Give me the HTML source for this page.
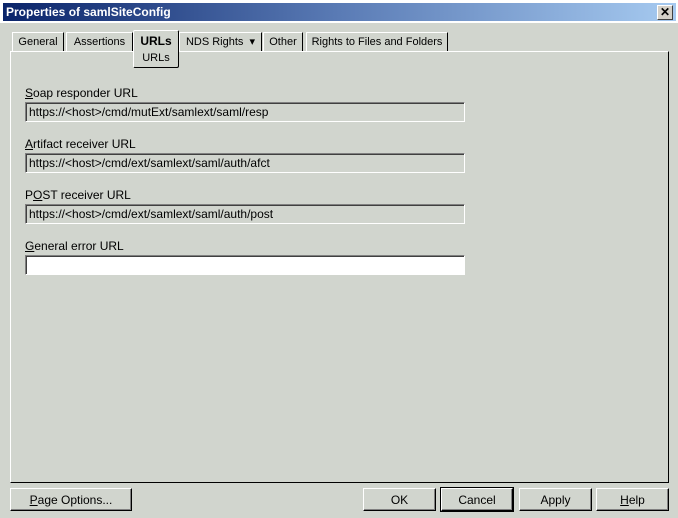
<!DOCTYPE html>
<html><head><style>
body{margin:0;width:678px;height:518px;background:#d1d5ce;font-family:"Liberation Sans",sans-serif;font-size:12px;position:relative;overflow:hidden}
.a{position:absolute;white-space:nowrap}
.title{left:0;top:0;width:678px;height:21px;background:#fff;border-top:2px solid #fff;}
.bar{left:3px;top:3px;width:673px;height:18px;background:linear-gradient(90deg,#0a246a,#5a7bb5 50%,#a6caf0);color:#fff;font-weight:bold;font-size:12px;line-height:18px;padding-left:3px;box-sizing:border-box}
.x{right:5px;top:5px;width:14px;height:13px;background:#d4d0c8;border:1px solid;border-color:#fff #404040 #404040 #fff;color:#000;font-size:12px;line-height:12px;text-align:center;font-weight:bold}
.tab{top:32px;height:19px;border:1px solid;border-color:#fff #000 transparent #fff;border-bottom:none;line-height:18px;text-align:center;box-sizing:border-box;font-size:11px}
.panel{left:10px;top:51px;width:659px;height:432px;border:1px solid;border-color:#fff #000 #000 #fff;box-sizing:border-box}
.lab{left:25px}
.f{left:25px;width:440px;height:20px;border:1px solid;border-color:#808080 #fff #fff #808080;box-shadow:inset 1px 1px 0 #404040;background:#d1d5ce;line-height:19px;padding-left:3px;box-sizing:border-box}
.btn{top:488px;height:23px;border:1px solid;border-color:#fff #000 #000 #fff;box-shadow:inset -1px -1px 0 #808080;text-align:center;line-height:22px;box-sizing:border-box}
</style></head><body>
<div class="a title"></div>
<div class="a bar">Properties of samlSiteConfig</div>
<div class="a x">✕</div>
<div class="a tab" style="left:12px;width:52px">General</div>
<div class="a tab" style="left:66px;width:67px">Assertions</div>
<div class="a tab" style="left:179px;width:83px">NDS Rights &nbsp;▾</div>
<div class="a tab" style="left:263px;width:40px">Other</div>
<div class="a tab" style="left:306px;width:142px">Rights to Files and Folders</div>
<div class="a panel"></div>
<div class="a" style="left:133px;top:30px;width:46px;height:38px;border:1px solid;border-color:#fff #000 #000 #fff;background:#d1d5ce;text-align:center;line-height:16px;box-sizing:border-box;padding-top:2px;border-radius:2px;font-size:11px"><b style="font-size:12px">URLs</b><br>URLs</div>
<div class="a lab" style="top:86px"><u>S</u>oap responder URL</div>
<div class="a f" style="top:102px">https://&lt;host&gt;/cmd/mutExt/samlext/saml/resp</div>
<div class="a lab" style="top:137px"><u>A</u>rtifact receiver URL</div>
<div class="a f" style="top:153px">https://&lt;host&gt;/cmd/ext/samlext/saml/auth/afct</div>
<div class="a lab" style="top:188px">P<u>O</u>ST receiver URL</div>
<div class="a f" style="top:204px">https://&lt;host&gt;/cmd/ext/samlext/saml/auth/post</div>
<div class="a lab" style="top:239px"><u>G</u>eneral error URL</div>
<div class="a f" style="top:255px;background:#fff"></div>
<div class="a btn" style="left:10px;width:122px"><u>P</u>age Options...</div>
<div class="a btn" style="left:363px;width:73px">OK</div>
<div class="a btn" style="left:441px;width:72px;outline:1px solid #000">Cancel</div>
<div class="a btn" style="left:519px;width:73px">Apply</div>
<div class="a btn" style="left:596px;width:73px"><u>H</u>elp</div>
</body></html>
